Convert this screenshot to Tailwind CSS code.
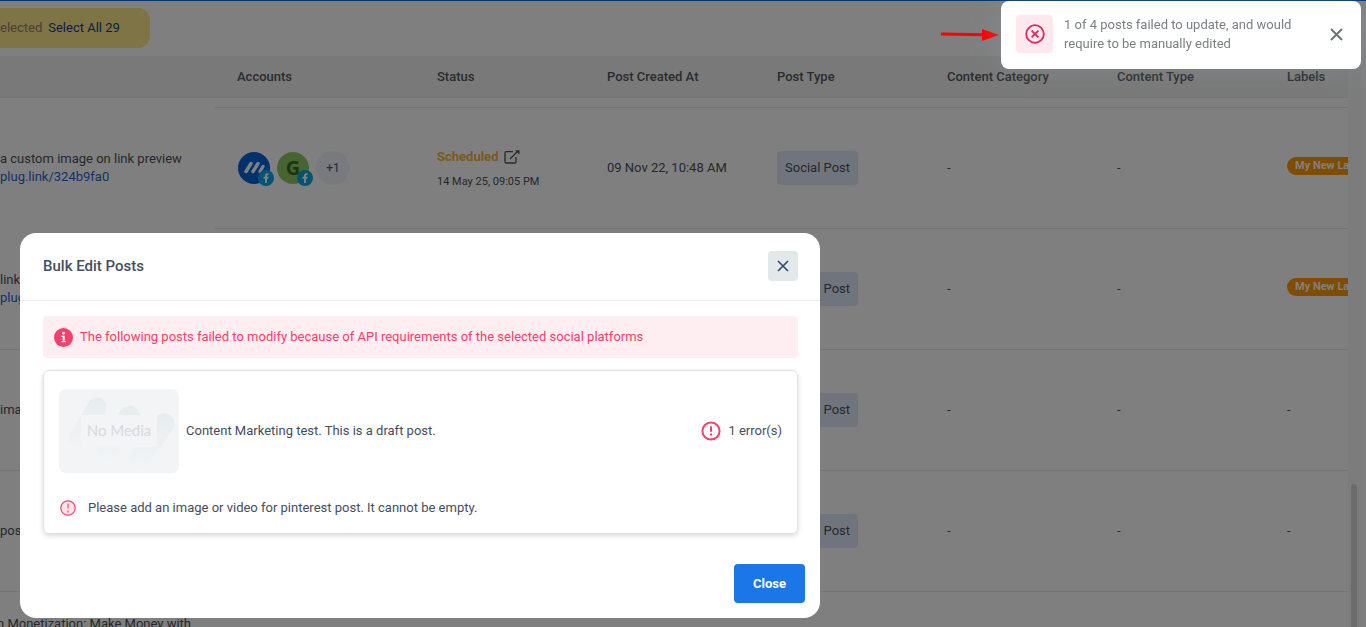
<!DOCTYPE html>
<html lang="en">
<head>
    <meta charset="UTF-8">
    <meta name="viewport" content="width=device-width, initial-scale=1.0">
    <title>Bulk Edit Posts</title>
    <script src="https://cdn.jsdelivr.net/npm/@tailwindcss/browser@4"></script>
</head>
<body class="relative h-screen overflow-hidden bg-white font-['Roboto',sans-serif] text-[13px] leading-[18px] text-[#4d5156]">

    <!-- Posts planner -->
    <main class="flex h-full flex-col border-t border-[#0a66d8]">
        <div class="pt-[7px] pb-2">
            <div class="flex h-10 w-[150px] items-center gap-1.5 rounded-r-xl bg-[#fee88a] text-[#8f8463]">
                <span>elected</span>
                <a href="#" class="text-[#18418b]">Select All 29</a>
            </div>
        </div>
        <div class="flex min-h-0 flex-1">
            <div class="min-w-0 flex-1 overflow-hidden">
                <table class="w-full table-fixed border-separate border-spacing-0 text-left">
                    <thead>
                        <tr class="h-[42px] bg-[#f3f3f3] text-[#55585c] [&>th]:border-b [&>th]:border-[#e9e9e9] [&>th]:pl-[22px] [&>th]:font-medium">
                            <th class="w-[215px]"></th>
                            <th class="w-[200px]">Accounts</th>
                            <th class="w-[170px]">Status</th>
                            <th class="w-[170px]">Post Created At</th>
                            <th class="w-[170px]">Post Type</th>
                            <th class="w-[170px]">Content Category</th>
                            <th class="w-[170px]">Content Type</th>
                            <th>Labels</th>
                        </tr>
                    </thead>
                    <tbody class="[&_td]:border-b [&_td]:border-[#e6e6e6] [&_td+td]:pl-[22px]">
                        <tr class="h-[10px]">
                            <td class="border-none!"></td>
                            <td colspan="7"></td>
                        </tr>
                        <tr class="h-[121px]">
                            <td class="border-none! pb-0.5 whitespace-nowrap">
                                <p>a custom image on link preview</p>
                                <a href="#" class="text-[#1f66d0]">plug.link/324b9fa0</a>
                            </td>
                            <td>
                                <div class="ml-px flex items-center gap-[7px]">
                                    <span class="relative size-8 rounded-full">
                                        <svg viewBox="0 0 32 32" class="size-8">
                                            <circle cx="16" cy="16" r="16" fill="#0062da"/>
                                            <path d="M8 19.500l5-8M15 19.500l5-8M22 19.500l3-5" stroke="#fff" stroke-width="3.400" stroke-linecap="round"/>
                                        </svg>
                                        <svg viewBox="0 0 16 16" class="absolute -right-1 -bottom-0.5 size-4">
                                            <circle cx="8" cy="8" r="8" fill="#00a6e8"/>
                                            <path d="M7 13V8.700H5.500V6.800H7V5.600C7 4 8 3.200 9.300 3.200h1.300v1.800h-.8c-.6 0-.8.3-.8.8v1h1.600l-.3 1.900H9V13z" fill="#fff"/>
                                        </svg>
                                    </span>
                                    <span class="relative flex size-8 items-center justify-center rounded-full bg-[#91c966] font-['Open_Sans',sans-serif] text-xl font-bold text-[#2f6d22]">
                                        G
                                        <svg viewBox="0 0 16 16" class="absolute -right-1 -bottom-0.5 size-4">
                                            <circle cx="8" cy="8" r="8" fill="#00a6e8"/>
                                            <path d="M7 13V8.700H5.500V6.800H7V5.600C7 4 8 3.200 9.300 3.200h1.300v1.800h-.8c-.6 0-.8.3-.8.8v1h1.600l-.3 1.900H9V13z" fill="#fff"/>
                                        </svg>
                                    </span>
                                    <span class="flex size-[34px] items-center justify-center rounded-full bg-[#f3f5ff] text-xs">+1</span>
                                </div>
                            </td>
                            <td>
                                <div class="flex items-center gap-1.5 pt-0.5">
                                    <span class="font-bold text-[#fbb03b]">Scheduled</span>
                                    <a href="#" aria-label="Open post">
                                        <svg viewBox="0 0 16 14" class="h-3.5 w-4" fill="none" stroke="#4d5156" stroke-width="1.300">
                                            <path d="M9 1.700H2.200A1.200 1.200 0 0 0 1 2.900v9A1.200 1.200 0 0 0 2.200 13h8.600a1.200 1.200 0 0 0 1.200-1.200V7M6 9l7.500-7.500"/>
                                            <path d="M11 .3h4.500v4.500z" fill="#4d5156" stroke="none"/>
                                        </svg>
                                    </a>
                                </div>
                                <p class="mt-[7px] text-[11px]">14 May 25, 09:05 PM</p>
                            </td>
                            <td>09 Nov 22, 10:48 AM</td>
                            <td><span class="inline-block rounded bg-[#e1ebfb] px-2 py-2">Social Post</span></td>
                            <td>-</td>
                            <td>-</td>
                            <td class="pb-1.5 whitespace-nowrap"><span class="inline-block rounded-full bg-[#ff9800] px-2 text-[11px] font-bold text-white">My New Label</span></td>
                        </tr>
                        <tr class="h-[121px]">
                            <td>
                                <p>link</p>
                                <a href="#" class="text-[#1f66d0]">plug.link</a>
                            </td>
                            <td></td><td></td><td></td>
                            <td><span class="inline-block rounded bg-[#e1ebfb] px-2 py-2">Social Post</span></td>
                            <td>-</td>
                            <td>-</td>
                            <td class="pb-1.5 whitespace-nowrap"><span class="inline-block rounded-full bg-[#ff9800] px-2 text-[11px] font-bold text-white">My New Label</span></td>
                        </tr>
                        <tr class="h-[121px]">
                            <td>image</td>
                            <td></td><td></td><td></td>
                            <td><span class="inline-block rounded bg-[#e1ebfb] px-2 py-2">Social Post</span></td>
                            <td>-</td>
                            <td>-</td>
                            <td>-</td>
                        </tr>
                        <tr class="h-[121px]">
                            <td>post</td>
                            <td></td><td></td><td></td>
                            <td><span class="inline-block rounded bg-[#e1ebfb] px-2 py-2">Social Post</span></td>
                            <td>-</td>
                            <td>-</td>
                            <td>-</td>
                        </tr>
                        <tr class="h-[121px]">
                            <td class="pt-[23px] align-top whitespace-nowrap"><p class="-ml-[3px]">n Monetization: Make Money with</p></td>
                            <td colspan="7"></td>
                        </tr>
                    </tbody>
                </table>
            </div>
            <div class="flex w-[18px] flex-col justify-end border-r-[5px] border-white bg-[#f9f9f9] pl-[3px]">
                <div class="h-[143px] w-1.5 rounded-t-full bg-[#d8d8d8]"></div>
            </div>
        </div>
    </main>

    <div class="fixed inset-0 bg-black/50"></div>

    <!-- Bulk edit modal -->
    <div role="dialog" aria-labelledby="modalTitle" class="fixed top-[233px] left-5 w-[800px] max-w-full rounded-2xl bg-white text-[#434e5e]">
        <div class="flex items-center justify-between border-b border-[#ebedef] pt-[18px] pr-[22px] pb-[19px] pl-[23px]">
            <h2 id="modalTitle" class="text-[15px] font-medium">Bulk Edit Posts</h2>
            <button type="button" aria-label="Close dialog" class="flex size-[30px] items-center justify-center rounded bg-[#e3e8eb]">
                <svg viewBox="0 0 12 12" class="size-3" fill="none" stroke="#2f4a6d" stroke-width="1.600"><path d="M1 1l10 10M11 1L1 11"/></svg>
            </button>
        </div>
        <div class="pt-[15px] pr-[22px] pl-[23px]">
            <div role="alert" class="flex h-[42px] items-center gap-[7px] rounded bg-[#feeef1] pl-[11px] text-[#f1416c]">
                <svg viewBox="0 0 20 20" class="size-[19px]">
                    <circle cx="10" cy="10" r="10" fill="#f1416c"/>
                    <circle cx="10" cy="5.500" r="1.500" fill="#fff"/>
                    <path d="M8 8.200h3.200v5.500h1.100V15H7.900v-1.300h1.200V9.500H8z" fill="#fff"/>
                </svg>
                <p>The following posts failed to modify because of API requirements of the selected social platforms</p>
            </div>
            <div class="mt-3 rounded-md border border-[#dfe1e4] px-[15px] pt-[18px] pb-4 shadow-[0_2px_5px_rgba(0,0,0,0.15)]">
                <div class="flex items-center">
                    <svg viewBox="0 0 120 84" class="h-[84px] w-[120px]" role="img" aria-label="No Media">
                        <defs>
                            <linearGradient id="pill" x1="0" y1="0" x2="0" y2="1">
                                <stop offset="0" stop-color="#e6edef"/>
                                <stop offset="1" stop-color="#f2f4f6"/>
                            </linearGradient>
                        </defs>
                        <rect width="120" height="84" rx="7" fill="#f2f4f6"/>
                        <path d="M31 11a10 10 0 0 1 16 11L27 57a10 10 0 0 1-17-10z" fill="url(#pill)"/>
                        <path d="M62 21a11 11 0 0 1 19 10L58 66a10 10 0 0 1-18-10z" fill="url(#pill)"/>
                        <path d="M97 29a10 10 0 0 1 17 11L90 74a10 10 0 0 1-18-10z" fill="url(#pill)"/>
                        <rect x="22" y="26" width="76" height="32" fill="#f2f4f6"/>
                        <text x="60" y="47" text-anchor="middle" font-family="Lato, sans-serif" font-size="15" fill="#d5dbe1">No Media</text>
                    </svg>
                    <p class="ml-[7px] flex-1">Content Marketing test. This is a draft post.</p>
                    <svg viewBox="0 0 20 20" class="mr-[7px] size-5" fill="none" stroke="#f1416c" stroke-width="2">
                        <circle cx="10" cy="10" r="8.600"/>
                        <path d="M10 5.300v5.400M10 12.500v2"/>
                    </svg>
                    <span>1 error(s)</span>
                </div>
                <div class="mt-[26px] flex items-center gap-3">
                    <svg viewBox="0 0 16 16" class="ml-px size-4" fill="#fee3e9" stroke="#f1416c" stroke-width="1.200">
                        <circle cx="8" cy="8" r="7.200"/>
                        <path d="M8 3.500v5M8 10.500v2" stroke="#f78ba5" stroke-width="2"/>
                    </svg>
                    <p>Please add an image or video for pinterest post. It cannot be empty.</p>
                </div>
            </div>
        </div>
        <div class="flex justify-end px-[15px] pt-[30px] pb-[15px]">
            <button type="button" class="h-[39px] w-[71px] rounded bg-[#1b76e8] font-bold text-white">Close</button>
        </div>
    </div>

    <!-- Toast -->
    <div class="fixed top-px right-[5px] flex items-center">
        <svg viewBox="0 0 58 14" class="mr-0.5 h-3.5 w-[58px]">
            <path d="M1 6l42 .7" stroke="#f00" stroke-width="3" stroke-linecap="round"/>
            <path d="M41 1l17 6-17 6z" fill="#f00"/>
        </svg>
        <div role="status" class="flex w-[360px] items-center rounded-lg bg-white px-[15px] pt-3.5 pb-4 leading-[19px] text-[#7b7f84] shadow-[0_0_30px_rgba(140,152,164,0.35)]">
            <span class="flex h-[38px] w-[37px] items-center justify-center rounded bg-[#fde8ee]">
                <svg viewBox="0 0 20 20" class="size-5" fill="none" stroke="#e0255e" stroke-width="1.800">
                    <circle cx="10" cy="10" r="8.800"/>
                    <path d="M6.600 6.600l6.800 6.800M13.400 6.600l-6.800 6.800"/>
                </svg>
            </span>
            <p class="mx-[11px] flex-1">1 of 4 posts failed to update, and would<br>require to be manually edited</p>
            <button type="button" aria-label="Dismiss" class="mr-[3px]">
                <svg viewBox="0 0 13 13" class="size-[13px]" fill="none" stroke="#70757a" stroke-width="2"><path d="M1 1l11 11M12 1L1 12"/></svg>
            </button>
        </div>
    </div>
</body>
</html>
